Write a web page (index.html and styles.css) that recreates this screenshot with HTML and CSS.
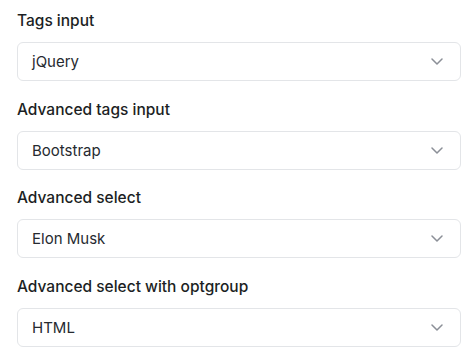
FILE: index.html
```html
<!DOCTYPE html>
<html lang="en">
<head>
    <meta charset="UTF-8">
    <meta name="viewport" content="width=device-width, initial-scale=1.0">
    <title>Selects</title>
    <link rel="stylesheet" href="styles.css">
</head>
<body>
    <div class="form">
        <div class="field">
            <label class="field-label">Tags input</label>
            <div class="select">
                <span class="select-value">jQuery</span>
                <svg class="chevron" width="12" height="7" viewBox="0 0 12 7"><path d="M1 1l5 5 5-5" fill="none" stroke="#8b8f97" stroke-width="1.5" stroke-linecap="round" stroke-linejoin="round"/></svg>
            </div>
        </div>
        <div class="field">
            <label class="field-label">Advanced tags input</label>
            <div class="select">
                <span class="select-value">Bootstrap</span>
                <svg class="chevron" width="12" height="7" viewBox="0 0 12 7"><path d="M1 1l5 5 5-5" fill="none" stroke="#8b8f97" stroke-width="1.5" stroke-linecap="round" stroke-linejoin="round"/></svg>
            </div>
        </div>
        <div class="field">
            <label class="field-label">Advanced select</label>
            <div class="select">
                <span class="select-value">Elon Musk</span>
                <svg class="chevron" width="12" height="7" viewBox="0 0 12 7"><path d="M1 1l5 5 5-5" fill="none" stroke="#8b8f97" stroke-width="1.5" stroke-linecap="round" stroke-linejoin="round"/></svg>
            </div>
        </div>
        <div class="field">
            <label class="field-label">Advanced select with optgroup</label>
            <div class="select">
                <span class="select-value">HTML</span>
                <svg class="chevron" width="12" height="7" viewBox="0 0 12 7"><path d="M1 1l5 5 5-5" fill="none" stroke="#8b8f97" stroke-width="1.5" stroke-linecap="round" stroke-linejoin="round"/></svg>
            </div>
        </div>
    </div>
</body>
</html>
```

FILE: styles.css
```css
body {
    margin: 0;
    font-family: Inter, "Noto Sans", sans-serif;
    background: #fff;
    color: #1f2328;
}

.form {
    padding: 10px 13px 0 17px;
}

.field {
    margin-bottom: 17.5px;
}

.field-label {
    display: block;
    font-size: 15.5px;
    font-weight: 500;
    line-height: 22px;
    margin-bottom: 10px;
    color: #1c1f24;
}

.select {
    display: flex;
    align-items: center;
    justify-content: space-between;
    box-sizing: border-box;
    height: 39px;
    padding: 0 17px 0 14px;
    border: 1px solid #e3e5e8;
    border-radius: 6px;
    background: #fff;
}

.select-value {
    font-size: 15px;
    color: #262a30;
}

.chevron {
    display: block;
}
```
